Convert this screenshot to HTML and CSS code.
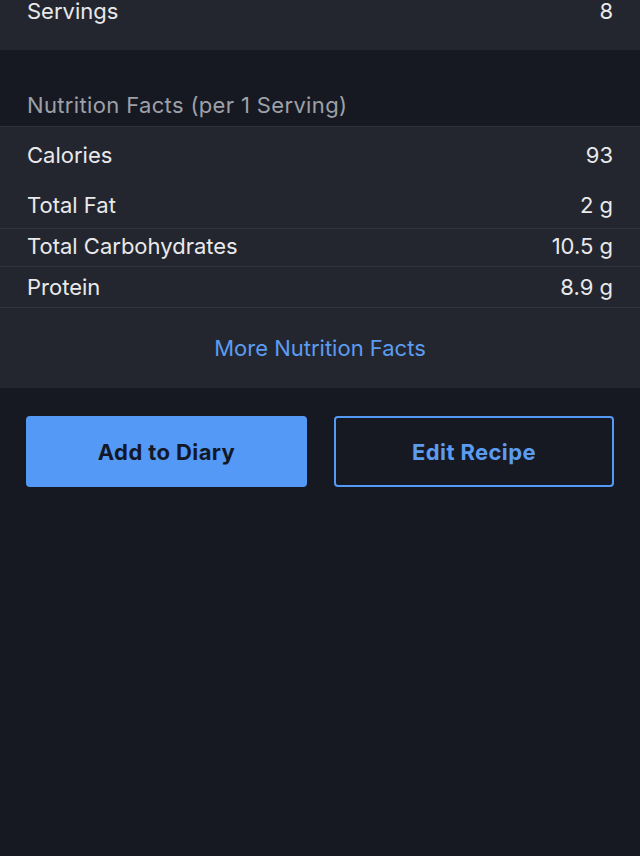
FILE: index.html
```html
<!DOCTYPE html>
<html>
<head>
<meta charset="utf-8">
<link rel="stylesheet" href="styles.css">
</head>
<body>
<div class="page">
  <div class="row servings">
    <span>Servings</span><span>8</span>
  </div>
  <div class="section-head">Nutrition Facts (per 1 Serving)</div>
  <div class="group">
    <div class="row r-cal"><span>Calories</span><span>93</span></div>
    <div class="row r-fat sep"><span>Total Fat</span><span>2 g</span></div>
    <div class="row r-carb sep"><span>Total Carbohydrates</span><span>10.5 g</span></div>
    <div class="row r-prot sep"><span>Protein</span><span>8.9 g</span></div>
    <div class="more">More Nutrition Facts</div>
  </div>
  <div class="actions">
    <button class="btn primary">Add to Diary</button>
    <button class="btn outline">Edit Recipe</button>
  </div>
</div>
</body>
</html>
```

FILE: styles.css
```css
html, body {
  margin: 0;
  padding: 0;
  background: #161922;
}
.page {
  width: 640px;
  height: 856px;
  background: #161922;
  font-family: Inter, "Noto Sans", "Liberation Sans", sans-serif;
  color: #e9e9ec;
  overflow: hidden;
}
.row {
  display: flex;
  justify-content: space-between;
  padding-left: 27px;
  padding-right: 27px;
  font-size: 22px;
  line-height: 24px;
  background: #24262f;
}
.servings {
  padding-top: 0;
  padding-bottom: 27px;
  margin-top: -1px;
}
.section-head {
  padding: 42px 27px 8px;
  font-size: 22px;
  letter-spacing: 0.35px;
  line-height: 26px;
  color: #9ea0a8;
  border-bottom: 1px solid #30323b;
}
.group {
  background: #24262f;
}
.sep {
  border-top: 1px solid #30323b;
}
.r-cal { padding-top: 16px; padding-bottom: 14px; }
.r-fat { padding-top: 11px; padding-bottom: 11px; border-top-color: #262831; }
.r-carb { padding-top: 5px; padding-bottom: 8px; }
.r-prot { padding-top: 8px; padding-bottom: 8px; }
.more {
  border-top: 1px solid #33353e;
  padding: 28px 0 28px;
  text-align: center;
  color: #5b9cf0;
  font-size: 22px;
  line-height: 24px;
}
.actions {
  display: flex;
  gap: 27px;
  padding: 28px 26px 0;
}
.btn {
  flex: none;
  box-sizing: border-box;
  height: 71px;
  border-radius: 4px;
  font-family: Inter, "Noto Sans", "Liberation Sans", sans-serif;
  font-size: 22px;
  letter-spacing: 0.4px;
  font-weight: 700;
  cursor: pointer;
}
.primary {
  width: 281px;
  background: #5599f6;
  border: none;
  color: #131827;
}
.outline {
  width: 280px;
  background: transparent;
  border: 2px solid #5599f6;
  color: #5b9cf0;
}
```
